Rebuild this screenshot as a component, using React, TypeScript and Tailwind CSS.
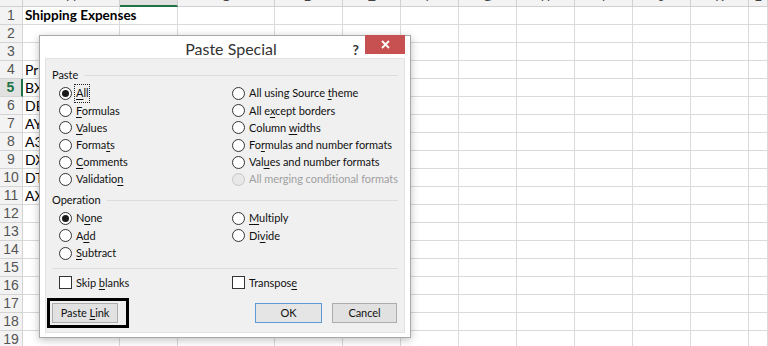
import React from "react";

const COLS = ["A", "B", "C", "D", "E", "F", "G", "H", "I", "J", "K", "L"];
const CELLS: Record<number, string> = {
  4: "Pr",
  5: "BX",
  6: "DB",
  7: "AY",
  8: "A3",
  9: "DX",
  10: "DT",
  11: "AX",
};

function Sheet() {
  const rows = Array.from({ length: 19 }, (_, i) => i + 1);
  return (
    <div className="grid grid-cols-[23px_97px_58px_97px_68px_58px_58px_58px_58px_58px_58px_58px_1fr] font-['Liberation_Sans',sans-serif] text-[13px] text-black">
      <div className="-mt-[13px] h-[20px] bg-[#f3f3f3] border-r border-b border-[#d0d0d0]" />
      {COLS.map((c) => (
        <div
          key={c}
          className={
            "-mt-[13px] h-[20px] flex items-center justify-center border-r border-[#d0d0d0] text-[#444] " +
            (c === "B" ? "bg-[#e1e1e1] border-b-2 border-b-[#217346] text-[#217346]" : "bg-[#f3f3f3] border-b")
          }
        >
          {c}
        </div>
      ))}
      {rows.map((r) => (
        <React.Fragment key={r}>
          <div
            className={
              "h-[18px] flex items-center justify-center border-b border-[#d4d4d4] text-[14px] " +
              (r === 5
                ? "bg-[#e1e1e1] text-[#217346] font-bold border-r-2 border-r-[#217346]"
                : "bg-[#f3f3f3] text-[#555] border-r")
            }
          >
            {r}
          </div>
          {COLS.map((c) => (
            <div
              key={c}
              className="relative h-[18px] flex items-center pl-[2px] border-r border-b border-[#dadada] whitespace-nowrap"
            >
              {c === "A" && r === 1 && (
                <span className="relative z-10 font-bold font-['Lato',sans-serif] text-[13.5px]">Shipping Expenses</span>
              )}
              {c === "A" && CELLS[r] && <span className="font-['Lato',sans-serif] text-[14px]">{CELLS[r]}</span>}
            </div>
          ))}
        </React.Fragment>
      ))}
    </div>
  );
}

function Label({ text, u }: { text: string; u: number }) {
  return (
    <span className="whitespace-nowrap">
      {text.slice(0, u)}
      <span className="underline underline-offset-2">{text[u]}</span>
      {text.slice(u + 1)}
    </span>
  );
}

function Radio({
  text,
  u,
  checked,
  disabled,
  focus,
}: {
  text: string;
  u: number;
  checked?: boolean;
  disabled?: boolean;
  focus?: boolean;
}) {
  return (
    <div
      className={
        "h-[17.2px] flex items-center gap-[3px] whitespace-nowrap " +
        (disabled ? "text-[#a0a0a0]" : "text-[#111]")
      }
    >
      <span
        className={
          "w-[13px] h-[13px] rounded-full border flex items-center justify-center shrink-0 " +
          (disabled ? "border-[#c6c6c6] bg-[#e8e8e8]" : "border-[#333] bg-white")
        }
      >
        {checked && <span className="w-[7px] h-[7px] rounded-full bg-[#1a1a1a]" />}
      </span>
      <span className={focus ? "outline outline-1 outline-dotted outline-[#222] px-[1px]" : "px-[1px]"}>
        {disabled ? text : <Label text={text} u={u} />}
      </span>
    </div>
  );
}

function Check({ text, u }: { text: string; u: number }) {
  return (
    <div className="flex items-center gap-[4px] text-[#111]">
      <span className="w-[13px] h-[13px] border border-[#333] bg-white shrink-0" />
      <Label text={text} u={u} />
    </div>
  );
}

function Group({ title }: { title: string }) {
  return (
    <div className="flex items-center gap-[6px] pr-[6px] h-[16px]">
      <span className="text-[#111]">{title}</span>
      <span className="flex-1 h-px bg-[#dcdcdc]" />
    </div>
  );
}

function Dialog() {
  return (
    <div className="absolute left-[39px] top-[35px] w-[372px] h-[303px] bg-white border border-[#a8a8a8] shadow-[0_2px_8px_rgba(0,0,0,0.25)] flex flex-col font-['Lato',sans-serif] text-[11px] tracking-[-0.05px]">
      <div className="relative h-[22px] flex items-center justify-center">
        <span className="ml-[12px] text-[16px] text-[#333] mt-[4px] tracking-normal">Paste Special</span>
        <span className="absolute right-[51px] top-[3px] text-[14px] font-bold text-[#333]">?</span>
        <span className="absolute right-[5px] -top-px w-[40px] h-[19px] bg-[#c75050] flex items-center justify-center">
          <svg width="9" height="9" viewBox="0 0 9 9" stroke="white" strokeWidth="1.8">
            <path d="M1 1L8 8M8 1L1 8" />
          </svg>
        </span>
      </div>
      <div className="mx-[5px] mb-[4px] flex-1 bg-[#f0f0f0] border border-[#e3e3e3] flex flex-col pl-[6px] pt-[8px]">
        <Group title="Paste" />
        <div className="grid grid-cols-[173px_1fr] mt-[2px] pl-[7px]">
          <div>
            <Radio text="All" u={0} checked focus />
            <Radio text="Formulas" u={0} />
            <Radio text="Values" u={0} />
            <Radio text="Formats" u={5} />
            <Radio text="Comments" u={0} />
            <Radio text="Validation" u={9} />
          </div>
          <div>
            <Radio text="All using Source theme" u={17} />
            <Radio text="All except borders" u={5} />
            <Radio text="Column widths" u={7} />
            <Radio text="Formulas and number formats" u={2} />
            <Radio text="Values and number formats" u={3} />
            <Radio text="All merging conditional formats" u={0} disabled />
          </div>
        </div>
        <div className="mt-[4px]">
          <Group title="Operation" />
        </div>
        <div className="grid grid-cols-[173px_1fr] mt-[2px] pl-[7px]">
          <div>
            <Radio text="None" u={1} checked />
            <Radio text="Add" u={1} />
            <Radio text="Subtract" u={0} />
          </div>
          <div>
            <Radio text="Multiply" u={0} />
            <Radio text="Divide" u={2} />
          </div>
        </div>
        <div className="mt-[6px] mr-[6px] h-px bg-[#dcdcdc]" />
        <div className="grid grid-cols-[173px_1fr] mt-[6px] pl-[7px]">
          <Check text="Skip blanks" u={5} />
          <Check text="Transpose" u={8} />
        </div>
        <div className="mt-[7px] flex items-center">
          <div className="-ml-[5px] border-[3px] border-black p-[2px] pr-[8px]">
            <div className="w-[66px] h-[20px] bg-[#e1e1e1] border border-[#adadad] flex items-center justify-center text-[#111]">
              <Label text="Paste Link" u={6} />
            </div>
          </div>
          <div className="ml-[126px] w-[67px] h-[20px] bg-[#e5e5e5] border border-[#5b9bd5] flex items-center justify-center text-[#111]">
            OK
          </div>
          <div className="ml-[10px] w-[65px] h-[20px] bg-[#e1e1e1] border border-[#adadad] flex items-center justify-center text-[#111]">
            Cancel
          </div>
        </div>
      </div>
    </div>
  );
}

export default function App() {
  return (
    <div className="relative w-[768px] h-[346px] overflow-hidden bg-white">
      <Sheet />
      <Dialog />
    </div>
  );
}
